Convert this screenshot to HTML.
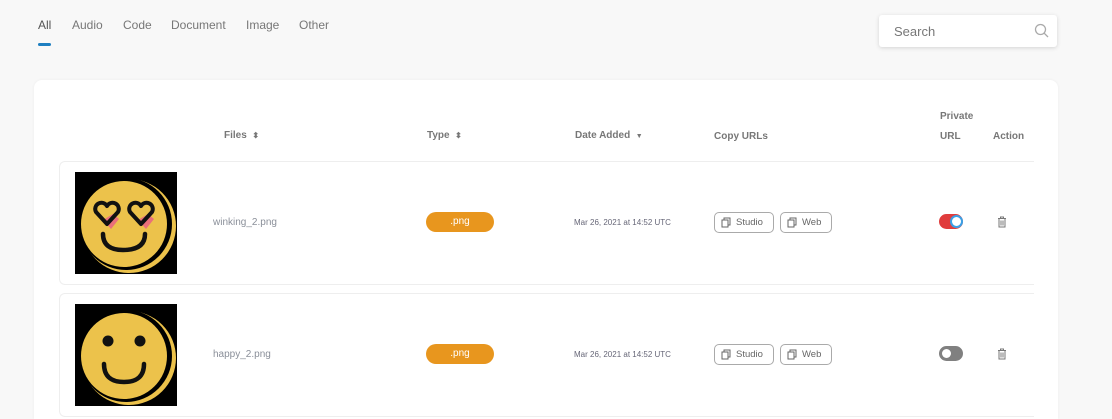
<!DOCTYPE html>
<html><head><style>
*{margin:0;padding:0;box-sizing:border-box}
html,body{width:1112px;height:419px;overflow:hidden}
body{background:#f8f8f8;font-family:"Liberation Sans",sans-serif;position:relative;color:#666}
.a{position:absolute}
.tab{font-size:12px;color:#777;top:18px}
.card{left:34px;top:80px;width:1024px;height:339px;background:#fff;border-radius:8px 8px 0 0;box-shadow:0 0 3px rgba(0,0,0,.05)}
.h{font-size:10px;font-weight:bold;color:#777}
.row{left:59px;width:975px;height:124px;border:1px solid #eee;border-right:none;border-radius:6px 0 0 6px;background:#fff}
.fn{font-size:10px;color:#8a8f99}
.pill{width:68px;height:20px;border-radius:10px;background:#e8961e;color:#fff;font-size:10px;text-align:center;line-height:20px}
.date{font-size:8px;color:#667}
.btn{height:21px;border:1px solid #aaa;border-radius:5px;font-size:9.5px;color:#666;display:flex;align-items:center;padding-left:6px;gap:5px}
.tog{width:24px;height:15px;border-radius:8px}
</style></head><body>
<div class="a tab" style="left:38px;color:#555">All</div>
<div class="a" style="left:38px;top:43px;width:13px;height:3px;border-radius:2px;background:#1e7fc1"></div>
<div class="a tab" style="left:72px">Audio</div>
<div class="a tab" style="left:123px">Code</div>
<div class="a tab" style="left:171px">Document</div>
<div class="a tab" style="left:246px">Image</div>
<div class="a tab" style="left:299px">Other</div>
<div class="a" style="left:879px;top:15px;width:178px;height:32px;background:#fff;border-radius:3px;box-shadow:0 1px 4px rgba(0,0,0,.15)">
<div class="a" style="left:15px;top:9px;font-size:13px;color:#777">Search</div>
<svg class="a" style="left:155px;top:8px" width="16" height="16" viewBox="0 0 16 16"><circle cx="6.5" cy="6.5" r="5" fill="none" stroke="#aaa" stroke-width="1.3"/><path d="M10.2 10.2L14 14" stroke="#aaa" stroke-width="1.3"/></svg>
</div>
<div class="a card"></div>
<div class="a h" style="left:224px;top:130px">Files &nbsp;<span style="font-size:8px">⬍</span></div>
<div class="a h" style="left:427px;top:130px">Type &nbsp;<span style="font-size:8px">⬍</span></div>
<div class="a h" style="left:575px;top:130px">Date Added &nbsp;<span style="font-size:7px">▼</span></div>
<div class="a h" style="left:714px;top:131px">Copy URLs</div>
<div class="a h" style="left:940px;top:111px">Private</div>
<div class="a h" style="left:940px;top:131px">URL</div>
<div class="a h" style="left:993px;top:131px">Action</div>

<div class="a row" style="top:161px"></div>
<div class="a row" style="top:293px"></div>

<svg class="a" style="left:75px;top:172px" width="102" height="102" viewBox="0 0 102 102">
<rect width="102" height="102" fill="#000"/>
<circle cx="54" cy="54" r="47" fill="#ecc24b"/>
<circle cx="51" cy="52" r="46" fill="#000"/>
<circle cx="49" cy="52" r="43" fill="#ecc24b"/>
<path d="M28 48 l10 -6 l6 5 l-8 10z" fill="#e9707a"/><path d="M63 48 l10 -6 l6 5 l-8 10z" fill="#e9707a"/>
<path d="M32 52 L21 40 A5 5 0 0 1 32 34 A5 5 0 0 1 43 40Z" fill="none" stroke="#111" stroke-width="4" stroke-linejoin="round"/>
<path d="M66 52 L55 40 A5 5 0 0 1 66 34 A5 5 0 0 1 77 40Z" fill="none" stroke="#111" stroke-width="4" stroke-linejoin="round"/>
<path d="M28 62 Q28 78 48 78 Q70 78 70 62" fill="none" stroke="#111" stroke-width="4.5" stroke-linecap="round"/>
</svg>
<svg class="a" style="left:75px;top:304px" width="102" height="102" viewBox="0 0 102 102">
<rect width="102" height="102" fill="#000"/>
<circle cx="54" cy="54" r="47" fill="#ecc24b"/>
<circle cx="51" cy="52" r="46" fill="#000"/>
<circle cx="49" cy="52" r="43" fill="#ecc24b"/>
<circle cx="33" cy="37" r="5.5" fill="#111"/><circle cx="65" cy="37" r="5.5" fill="#111"/>
<path d="M29 60 Q29 78 49 78 Q69 78 69 60" fill="none" stroke="#111" stroke-width="4.5" stroke-linecap="round"/>
</svg>

<div class="a fn" style="left:213px;top:217px">winking_2.png</div>
<div class="a fn" style="left:213px;top:349px">happy_2.png</div>
<div class="a pill" style="left:426px;top:212px">.png</div>
<div class="a pill" style="left:426px;top:344px">.png</div>
<div class="a date" style="left:574px;top:218px">Mar 26, 2021 at 14:52 UTC</div>
<div class="a date" style="left:574px;top:350px">Mar 26, 2021 at 14:52 UTC</div>

<div class="a btn" style="left:714px;top:212px;width:60px"><svg width="10" height="11" viewBox="0 0 10 11"><rect x="1" y="3" width="6" height="7" fill="none" stroke="#666"/><path d="M3 3V1h6v7H7" fill="none" stroke="#666"/></svg>Studio</div>
<div class="a btn" style="left:780px;top:212px;width:52px"><svg width="10" height="11" viewBox="0 0 10 11"><rect x="1" y="3" width="6" height="7" fill="none" stroke="#666"/><path d="M3 3V1h6v7H7" fill="none" stroke="#666"/></svg>Web</div>
<div class="a btn" style="left:714px;top:344px;width:60px"><svg width="10" height="11" viewBox="0 0 10 11"><rect x="1" y="3" width="6" height="7" fill="none" stroke="#666"/><path d="M3 3V1h6v7H7" fill="none" stroke="#666"/></svg>Studio</div>
<div class="a btn" style="left:780px;top:344px;width:52px"><svg width="10" height="11" viewBox="0 0 10 11"><rect x="1" y="3" width="6" height="7" fill="none" stroke="#666"/><path d="M3 3V1h6v7H7" fill="none" stroke="#666"/></svg>Web</div>

<div class="a tog" style="left:939px;top:214px;background:#e03c3c"><div class="a" style="left:11px;top:1px;width:13px;height:13px;border-radius:7px;background:#fff;border:2px solid #3aa0e6"></div></div>
<div class="a tog" style="left:939px;top:346px;background:#808080"><div class="a" style="left:3px;top:3px;width:9px;height:9px;border-radius:5px;background:#fff"></div></div>

<svg class="a" style="left:997px;top:216px" width="10" height="12" viewBox="0 0 10 12"><path d="M1 2.5h8M3.5 2.5V1h3v1.5M2 3v8h6V3M4 4.5v5M6 4.5v5" fill="none" stroke="#777" stroke-width="1"/></svg>
<svg class="a" style="left:997px;top:348px" width="10" height="12" viewBox="0 0 10 12"><path d="M1 2.5h8M3.5 2.5V1h3v1.5M2 3v8h6V3M4 4.5v5M6 4.5v5" fill="none" stroke="#777" stroke-width="1"/></svg>
</body></html>
